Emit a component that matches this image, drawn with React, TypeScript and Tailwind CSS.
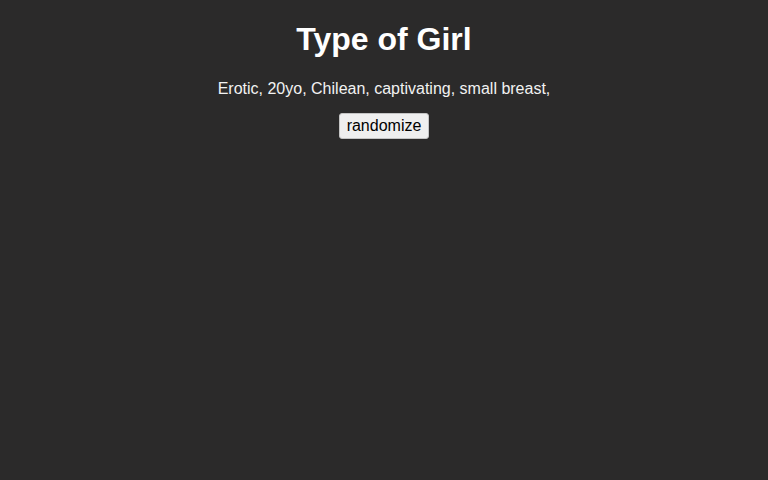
import { useState } from "react"

const moods = ["Erotic", "Sweet", "Playful", "Elegant"]
const ages = ["20yo", "23yo", "25yo", "28yo"]
const origins = ["Chilean", "Italian", "Japanese", "Brazilian"]
const traits = ["captivating", "shy", "bold", "charming"]
const bodies = ["small breast", "athletic", "curvy", "slim"]

const pick = (list: string[]) => list[Math.floor(Math.random() * list.length)]

export default function App() {
    const [parts, setParts] = useState(["Erotic", "20yo", "Chilean", "captivating", "small breast"])

    const randomize = () => setParts([pick(moods), pick(ages), pick(origins), pick(traits), pick(bodies)])

    return (
        <div className="min-h-screen bg-[#2b2a2a] text-white text-center font-['Liberation_Sans',Arial,sans-serif] pt-[21px]">
            <h1 className="text-[32px] leading-[37px] font-bold">Type of Girl</h1>
            <p className="mt-[22px] text-base leading-[18px] text-[#f2f2f2]">{parts.map(p => p + ", ")}</p>
            <button
                onClick={randomize}
                className="mt-[15px] bg-[#efefef] text-black text-base leading-[18px] px-[7px] py-[3px] border border-[#c4c4c4] rounded-[3px]"
            >
                randomize
            </button>
        </div>
    )
}
